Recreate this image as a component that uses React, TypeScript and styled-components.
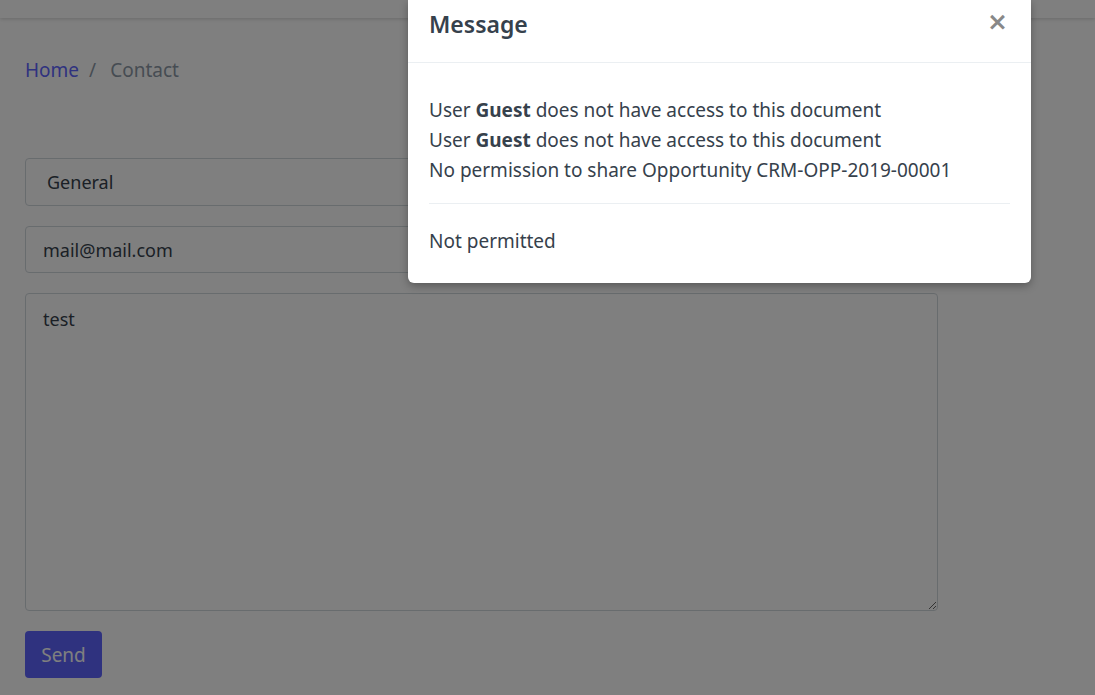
import React from 'react';
import styled, { createGlobalStyle } from 'styled-components';

const GlobalStyle = createGlobalStyle`
  html, body {
    margin: 0;
    padding: 0;
    background: #ffffff;
    font-family: "Noto Sans", "Open Sans", sans-serif;
    color: #36414c;
  }
  * { box-sizing: border-box; }
`;

const Page = styled.div`
  width: 1095px;
  height: 695px;
  overflow: hidden;
  position: relative;
`;

const Navbar = styled.div`
  height: 18px;
  background: #fff;
  box-shadow: 0 1px 4px rgba(0, 0, 0, 0.18);
`;

const Content = styled.div`
  padding: 38px 25px 0;
  width: 963px;
`;

const Crumbs = styled.nav`
  display: flex;
  align-items: center;
  font-size: 19px;
  line-height: 28px;
  height: 28px;
`;

const CrumbLink = styled.a`
  color: #5e64ff;
  text-decoration: none;
`;

const CrumbSep = styled.span`
  color: #8d99a6;
  margin: 0 14px 0 10px;
`;

const CrumbCurrent = styled.span`
  color: #8d99a6;
`;

const Form = styled.form`
  margin-top: 74px;
  display: flex;
  flex-direction: column;
  gap: 20px;
`;

const Select = styled.div`
  height: 48px;
  border: 1px solid #d1d8dd;
  border-radius: 4px;
  display: flex;
  align-items: center;
  padding: 0 21px;
  font-size: 18px;
  color: #36414c;
`;

const Input = styled.input`
  height: 47px;
  border: 1px solid #d1d8dd;
  border-radius: 4px;
  padding: 0 17px;
  font-size: 18px;
  font-family: inherit;
  color: #36414c;
  background: #fff;
  outline: none;
`;

const TextArea = styled.textarea`
  height: 318px;
  border: 1px solid #d1d8dd;
  border-radius: 4px;
  padding: 13px 17px;
  font-size: 18px;
  font-family: inherit;
  color: #36414c;
  background: #fff;
  outline: none;
  resize: vertical;
`;

const SendButton = styled.button`
  align-self: flex-start;
  width: 77px;
  height: 47px;
  border: none;
  border-radius: 4px;
  background: #5e64ff;
  color: #fff;
  font-size: 19px;
  font-family: inherit;
`;

const Backdrop = styled.div`
  position: absolute;
  inset: 0;
  background: rgba(0, 0, 0, 0.5);
`;

const Dialog = styled.div`
  position: absolute;
  left: 408px;
  top: 0;
  width: 623px;
  background: #fff;
  border-radius: 0 0 6px 6px;
  box-shadow: 0 3px 9px rgba(0, 0, 0, 0.3);
`;

const DialogHeader = styled.div`
  height: 63px;
  border-bottom: 1px solid #ebeff2;
  display: flex;
  align-items: flex-start;
  justify-content: space-between;
  padding: 6px 23px 0 21px;
`;

const Title = styled.h4`
  margin: 0;
  font-size: 23px;
  font-weight: 600;
  line-height: 36px;
  color: #36414c;
`;

const Close = styled.button`
  border: none;
  background: none;
  padding: 0;
  margin-top: 2px;
  font-size: 25px;
  font-weight: 700;
  line-height: 28px;
  color: #888;
  font-family: "DejaVu Sans", sans-serif;
`;

const DialogBody = styled.div`
  padding: 32px 21px 27px;
  font-size: 19px;
  line-height: 30px;
  color: #36414c;
`;

const MsgLine = styled.div``;

const Divider = styled.hr`
  border: none;
  border-top: 1px solid #ebeff2;
  margin: 18px 0 22px;
`;

export default function App() {
  return (
    <Page>
      <GlobalStyle />
      <Navbar />
      <Content>
        <Crumbs>
          <CrumbLink href="#">Home</CrumbLink>
          <CrumbSep>/</CrumbSep>
          <CrumbCurrent>Contact</CrumbCurrent>
        </Crumbs>
        <Form onSubmit={e => e.preventDefault()}>
          <Select>General</Select>
          <Input defaultValue="mail@mail.com" />
          <TextArea defaultValue="test" />
          <SendButton type="submit">Send</SendButton>
        </Form>
      </Content>
      <Backdrop />
      <Dialog>
        <DialogHeader>
          <Title>Message</Title>
          <Close aria-label="Close">×</Close>
        </DialogHeader>
        <DialogBody>
          <MsgLine>User <b>Guest</b> does not have access to this document</MsgLine>
          <MsgLine>User <b>Guest</b> does not have access to this document</MsgLine>
          <MsgLine>No permission to share Opportunity CRM-OPP-2019-00001</MsgLine>
          <Divider />
          <MsgLine>Not permitted</MsgLine>
        </DialogBody>
      </Dialog>
    </Page>
  );
}
